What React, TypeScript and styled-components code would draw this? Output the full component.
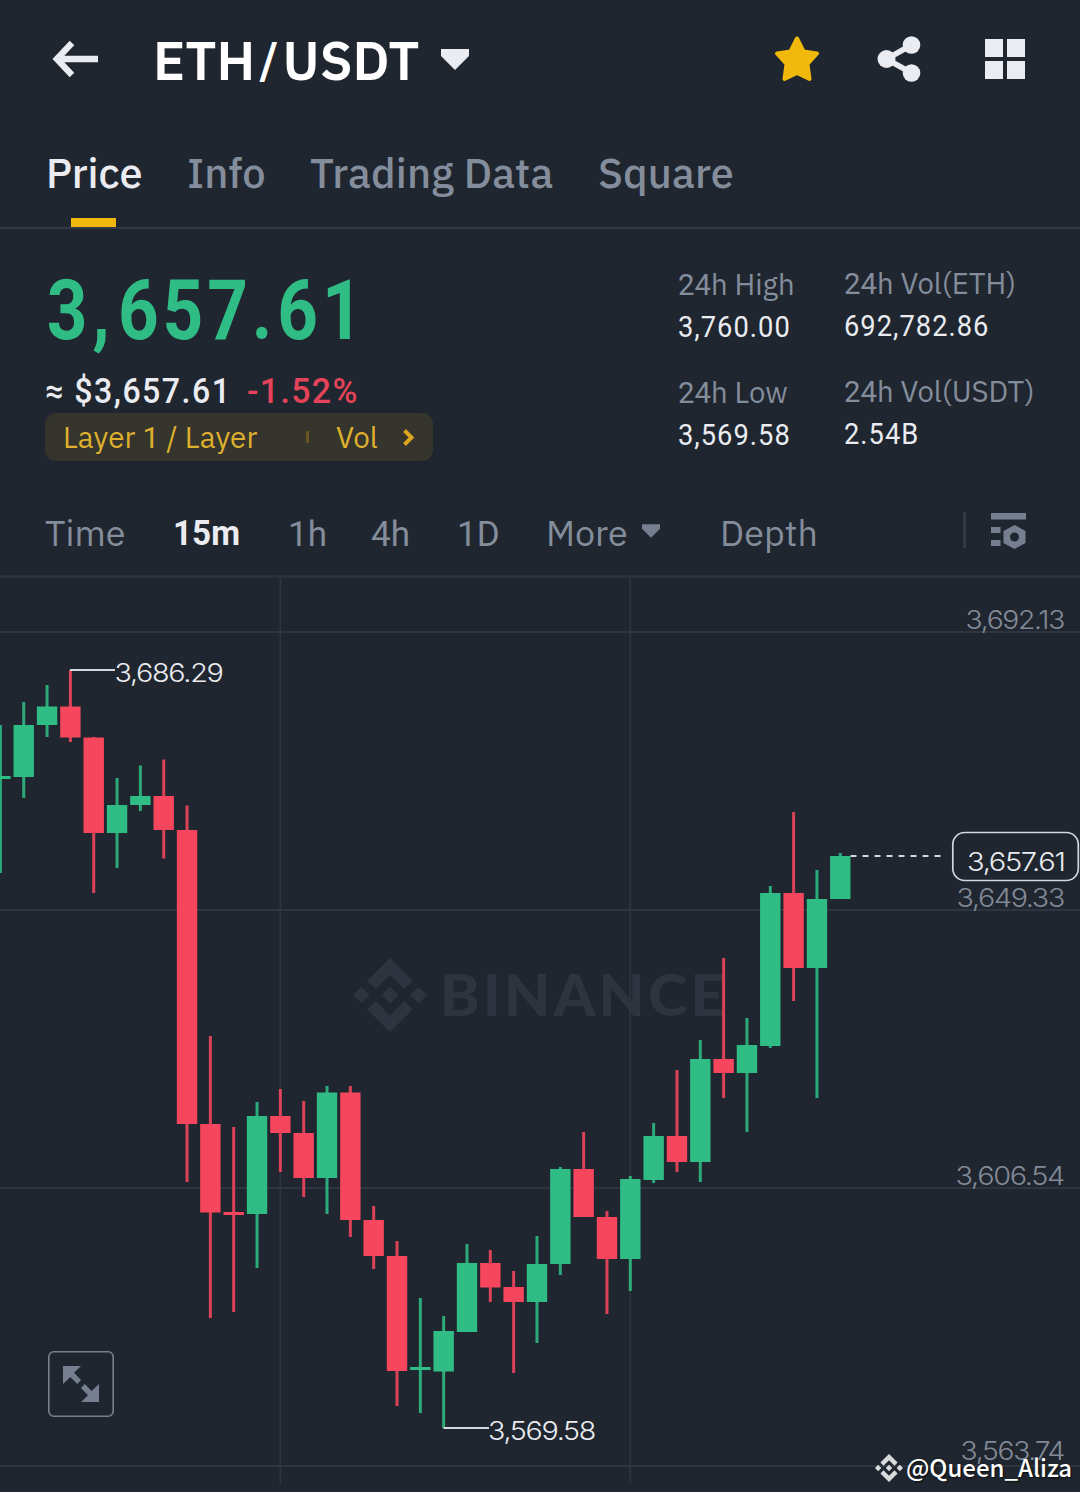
import React from 'react';
import styled, { createGlobalStyle } from 'styled-components';

const c = {
  bg: '#1f262f',
  line: '#2e3541',
  text: '#eaecf1',
  muted: '#848d9b',
  icon: '#767f90',
  axis: '#838a97',
  green: '#2fbd85',
  red: '#f6465d',
  yellow: '#f0b90b',
};

const plex = `"IBM Plex Sans", "Noto Sans CJK SC", sans-serif`;
const din = `"DIN", Roboto, sans-serif`;

const Global = createGlobalStyle`
  * { box-sizing: border-box; }
  body { margin: 0; background: ${c.bg}; }
`;

const Screen = styled.main`
  width: 1080px;
  height: 1492px;
  display: flex;
  flex-direction: column;
  overflow: hidden;
  background: ${c.bg};
  color: ${c.text};
  font-family: ${plex};
`;

interface Fit { $track?: number; $squeeze?: number }

const Label = styled.span<Fit>`
  display: block;
  white-space: pre;
  transform-origin: 0 50%;
  letter-spacing: ${p => p.$track ?? 0}px;
  transform: scaleX(${p => p.$squeeze ?? 1});
`;

const Digits = styled.span`
  font-family: ${din};
  line-height: 1;
`;

const Header = styled.header`
  height: 115px;
  display: flex;
  align-items: center;
  padding: 4px 55px 0 52px;
`;

const Glyph = styled.svg`
  display: block;
  flex: none;
  overflow: visible;
`;

const BackIcon = styled(Glyph)`
  margin-top: -1px;
`;

const PairButton = styled.div`
  display: flex;
  align-items: center;
  flex: 1;
  margin-left: 55px;
`;

const PairName = styled(Label)`
  width: 288px;
  font-size: 54.5px;
  line-height: 80px;
  font-weight: 600;
  color: #fff;
`;

const Slash = styled.span`
  font-size: 45px;
  line-height: 1;
  vertical-align: 5px;
  margin: 0 4px 0 4px;
`;

const Actions = styled.div`
  display: flex;
  align-items: center;
  gap: 57px;
  margin-top: -1px;
`;

const Tabs = styled.nav`
  height: 114px;
  display: flex;
  padding-left: 46px;
  border-bottom: 2px solid #323944;
`;

const Tab = styled.div<{ $active?: boolean; $width: number }>`
  width: ${p => p.$width}px;
  margin-right: 46px;
  padding-top: 27px;
  display: flex;
  flex-direction: column;
  justify-content: space-between;
  font-size: 41.6px;
  line-height: 60px;
  font-weight: 500;
  color: ${p => (p.$active ? c.text : c.muted)};
`;

const Underline = styled.i`
  width: 45px;
  height: 9px;
  margin-left: 25px;
  background: ${c.yellow};
`;

const Summary = styled.section`
  height: 256px;
  display: flex;
  padding: 0 0 0 45px;
  flex: none;
`;

const Quote = styled.div`
  width: 633px;
  flex: none;
  padding-top: 32px;
`;

const LastPrice = styled(Label)`
  font: 700 83px/100px ${din};
  color: ${c.green};
  padding-left: 2px;
`;

const Separator = styled.span<{ $left: number; $right: number }>`
  margin: 0 ${p => p.$right}px 0 ${p => p.$left}px;
`;

const SubPrice = styled.div`
  display: flex;
  height: 52px;
  padding-top: 10px;
  font: 500 34.5px/40px ${din};
`;

const Fiat = styled(Label)`
  width: 202px;
`;

const Change = styled(Label)`
  color: ${c.red};
  opacity: 0.92;
`;

const Category = styled.div`
  width: 388px;
  height: 48px;
  display: flex;
  align-items: center;
  padding-left: 18px;
  border-radius: 11px;
  background: #35342d;
  color: #dfb02d;
  font-size: 29.6px;
  line-height: 44px;
`;

const CategoryName = styled(Label)`
  width: 243px;
`;

const CategoryRule = styled.i`
  width: 3px;
  height: 12px;
  background: #685624;
  margin-right: 27px;
`;

const CategoryVol = styled(Label)`
  width: 67px;
`;

const Stats = styled.div`
  display: flex;
  flex: none;
`;

const StatColumn = styled.div<{ $width: number; $top: number }>`
  width: ${p => p.$width}px;
  padding-top: ${p => p.$top}px;
`;

const Stat = styled.div`
  height: 108px;
`;

const StatName = styled(Label)`
  font-size: 29.3px;
  line-height: 42px;
  color: ${c.muted};
  font-weight: 400;
`;

const StatValue = styled(Label)`
  font: 400 29px/42px ${din};
  padding-top: 1px;
`;

const Intervals = styled.nav`
  height: 93px;
  flex: none;
  display: flex;
  align-items: center;
  padding: 2px 0 0 45px;
  border-bottom: 3px solid #2a303c;
`;

const Interval = styled(Label)<{ $width: number; $numeric?: boolean; $active?: boolean }>`
  width: ${p => p.$width}px;
  font-family: ${p => (p.$numeric ? din : plex)};
  font-size: ${p => (p.$numeric ? 35 : 35.8)}px;
  font-weight: ${p => (p.$active ? 700 : 400)};
  line-height: 44px;
  padding-top: ${p => (p.$active ? 6 : p.$numeric ? 8 : 4)}px;
  color: ${p => (p.$active ? c.text : c.muted)};
`;

const MoreCaret = styled.div`
  width: 78px;
`;

const IntervalRule = styled.i`
  width: 3px;
  height: 36px;
  margin: 0 25px 3px 0;
  background: #333a46;
`;

const ChartArea = styled.section`
  position: relative;
  height: 914px;
`;

const Plot = styled.svg`
  display: block;
  font-family: Inter, "Liberation Sans", sans-serif;
  font-weight: 300;
  font-size: 26px;
`;

const PriceText = styled.text`
  letter-spacing: -1.2px;
`;

const Watermark = styled.text`
  font: 900 57px Lato, sans-serif;
  letter-spacing: 3px;
  fill: #2e333f;
`;

const Credit = styled.div`
  position: absolute;
  right: 8px;
  bottom: 4px;
  height: 40px;
  display: flex;
  align-items: center;
  gap: 3px;
  color: #fff;
  font-family: "Noto Sans CJK SC", sans-serif;
  font-size: 24px;
  line-height: 36px;
  font-weight: 500;
  text-shadow: 1px 1px 2px rgba(0, 0, 0, 0.7);
`;

const CreditName = styled(Label)`
  margin-top: -2px;
`;

const logoPath =
  'M38.73 53.2l24.59-24.58 24.6 24.6 14.3-14.31L63.32 0 24.43 38.9zM0 63.31l14.3-14.31 14.31 14.31-14.31 14.3zM38.73 73.41L63.32 98l24.6-24.6 14.31 14.29L63.32 126.6 24.43 87.71zM98 63.31l14.3-14.31 14.31 14.3-14.31 14.32zM77.83 63.3L63.32 48.78 48.81 63.28l14.51 14.5z';

// One entry per candle: high, body top, body bottom, low (canvas y), rising
type Candle = [number, number, number, number, 0 | 1];
const candles: Candle[] = [
  [725, 776, 779, 873, 1],
  [702, 725, 777, 798, 1],
  [685, 706.5, 725, 737, 1],
  [670, 706.5, 737.5, 742, 0],
  [737, 737.5, 833, 893, 0],
  [778, 805, 833, 868, 1],
  [765.5, 796, 805, 811, 1],
  [759.5, 796, 830, 858.5, 0],
  [805.5, 830, 1124, 1182, 0],
  [1036, 1124, 1212.5, 1318, 0],
  [1127, 1212, 1215, 1312, 0],
  [1102, 1116, 1214, 1268, 1],
  [1089, 1116, 1133, 1172, 0],
  [1101, 1133, 1178, 1197, 0],
  [1086, 1092.5, 1178, 1214, 1],
  [1086, 1092.5, 1220, 1237, 0],
  [1206, 1220, 1256, 1269, 0],
  [1241, 1256, 1371, 1406, 0],
  [1298, 1367, 1370, 1413, 1],
  [1316, 1331, 1371.5, 1428, 1],
  [1244, 1263, 1332, 1332, 1],
  [1250, 1263, 1287.5, 1302, 0],
  [1271, 1287, 1302, 1373, 0],
  [1236, 1264, 1302, 1343, 1],
  [1167, 1169, 1264, 1275, 1],
  [1132, 1169, 1217, 1217, 0],
  [1211, 1217, 1259, 1314, 0],
  [1176, 1179, 1259, 1291, 1],
  [1123, 1136, 1180, 1183, 1],
  [1070, 1136, 1162, 1172, 0],
  [1040, 1059, 1162, 1182, 1],
  [958, 1059, 1073, 1098, 0],
  [1018, 1045, 1073, 1132, 1],
  [886, 893, 1046, 1048, 1],
  [812, 893, 968, 1001, 0],
  [870, 899, 968, 1098, 1],
  [853, 856, 899, 899, 1],
];

const axis = [
  { text: '3,692.13', x: 965.5, w: 98.5, y: 629 },
  { text: '3,649.33', x: 956.5, w: 107.5, y: 907 },
  { text: '3,606.54', x: 955.5, w: 108.5, y: 1185 },
  { text: '3,563.74', x: 960.5, w: 103.5, y: 1460 },
];

const stats = [
  { width: 166, top: 34, rows: [['High', '3,760.00'], ['Low', '3,569.58']] },
  { width: 200, top: 33, rows: [['Vol(ETH)', '692,782.86'], ['Vol(USDT)', '2.54B']] },
];

const Caret = ({ w, h, color }: { w: number; h: number; color: string }) => (
  <Glyph width={w} height={h} viewBox="0 0 28 21">
    <path d="M0 0H28V7L14 21L0 7Z" fill={color} />
  </Glyph>
);

const Chart = () => (
  <Plot width={1080} height={914} viewBox="0 578 1080 914">
    <g transform="translate(353 958) scale(.5845)">
      <path d={logoPath} fill="#2e333f" />
    </g>
    <Watermark x={440} y={1016} textLength={288} lengthAdjust="spacingAndGlyphs">BINANCE</Watermark>
    <g fill={c.line}>
      {[631, 909, 1187, 1465].map(y => <rect key={y} x={0} y={y} width={1080} height={2} />)}
      {[279.5, 629.5].map(x => <rect key={x} x={x} y={578} width={1.6} height={906} />)}
    </g>
    {candles.map(([high, top, bottom, low, up], i) => {
      const x = 0.4 + i * 23.33;
      return (
        <g key={i} fill={up ? c.green : c.red}>
          <rect x={x - 1.5} y={high} width={3} height={low - high} opacity={0.88} />
          <rect x={x - 10.2} y={top} width={20.4} height={bottom - top} />
        </g>
      );
    })}
    <g stroke="#d4d7de" strokeWidth={2} fill="none">
      <path d="M70 670H115M443.500 1428H489" />
      <path d="M850.500 856H942" strokeDasharray="6 6" strokeWidth={1.8} />
      <rect x={952.800} y={832.500} width={125.500} height={48} rx={12} strokeWidth={1.7} />
    </g>
    <g fill={c.axis}>
      {axis.map(a => (
        <PriceText key={a.text} x={a.x} y={a.y} textLength={a.w} lengthAdjust="spacingAndGlyphs">{a.text}</PriceText>
      ))}
    </g>
    <g fill={c.text}>
      <PriceText x={114.5} y={682} textLength={108} lengthAdjust="spacingAndGlyphs">3,686.29</PriceText>
      <PriceText x={488} y={1440} textLength={107} lengthAdjust="spacingAndGlyphs">3,569.58</PriceText>
      <PriceText x={967} y={871} textLength={97.5} lengthAdjust="spacingAndGlyphs">3,657.61</PriceText>
    </g>
    <rect x={48.800} y={1351.800} width={64.400} height={64.400} rx={5} fill="none" stroke={c.icon} strokeWidth={1.6} />
    <path
      fill={c.icon}
      d="M63 1366H81L74 1372.700L81 1380L77.300 1384L70.300 1377L63 1384ZM99 1402H81L88 1395.300L81 1388L84.700 1384L91.700 1391L99 1384Z"
    />
  </Plot>
);

export default function App() {
  return (
    <Screen>
      <Global />
      <Header>
        <BackIcon width={46} height={38} viewBox="0 0 46 38">
          <path d="M20 3L4.800 19L20 35M5 19H46" fill="none" stroke={c.text} strokeWidth={6.3} />
        </BackIcon>
        <PairButton>
          <PairName $squeeze={0.988}>ETH<Slash>/</Slash>USDT</PairName>
          <Caret w={28} h={21} color={c.text} />
        </PairButton>
        <Actions>
          <Glyph width={46} height={46} viewBox="0 0 46 46">
            <path
              d="M23 2.500L29.500 15.500L43 17.500L33.500 28L35.500 43L23 37L10.500 43L12.500 28L3 17.500L16.500 15.500Z"
              fill={c.yellow}
              stroke={c.yellow}
              strokeWidth={4}
              strokeLinejoin="round"
            />
          </Glyph>
          <Glyph width={44} height={46} viewBox="0 0 44 46">
            <path d="M34.500 9L9.500 23L34.500 37" fill="none" stroke={c.text} strokeWidth={5.500} />
            <g fill={c.text}>
              <circle cx={9.500} cy={23} r={9} />
              <circle cx={34.500} cy={9} r={8.800} />
              <circle cx={34.500} cy={37} r={8.800} />
            </g>
          </Glyph>
          <Glyph width={47} height={40} viewBox="0 0 47 40">
            <path d="M7 0H25V18H7ZM29 0H47V18H29ZM7 22H25V40H7ZM29 22H47V40H29Z" fill={c.text} />
          </Glyph>
        </Actions>
      </Header>

      <Tabs>
        <Tab $width={95} $active><Label>Price</Label><Underline /></Tab>
        <Tab $width={77}><Label>Info</Label></Tab>
        <Tab $width={242}><Label $track={0.15}>Trading Data</Label></Tab>
        <Tab $width={140}><Label $track={0.1}>Square</Label></Tab>
      </Tabs>

      <Summary>
        <Quote>
          <LastPrice $track={4.6} $squeeze={0.855}>
            3<Separator $left={1} $right={5}>,</Separator>657<Separator $left={0} $right={1}>.</Separator>61
          </LastPrice>
          <SubPrice>
            <Fiat $track={1.6} $squeeze={0.93}>≈ $3,657.61</Fiat>
            <Change $track={1.4} $squeeze={0.98}>-1.52%</Change>
          </SubPrice>
          <Category>
            <CategoryName $track={0.07}>Layer <Digits>1</Digits> / Layer</CategoryName>
            <CategoryRule />
            <CategoryVol>Vol</CategoryVol>
            <Glyph width={11} height={17} viewBox="0 0 11 17">
              <path d="M1.500 1.500L8.500 8.500L1.500 15.500" fill="none" stroke="#dba51f" strokeWidth={4} />
            </Glyph>
          </Category>
        </Quote>
        <Stats>
          {stats.map(col => (
            <StatColumn key={col.top} $width={col.width} $top={col.top}>
              {col.rows.map(([name, value]) => (
                <Stat key={name}>
                  <StatName><Digits>24</Digits>h {name}</StatName>
                  <StatValue $track={1.1} $squeeze={0.94}>{value}</StatValue>
                </Stat>
              ))}
            </StatColumn>
          ))}
        </Stats>
      </Summary>

      <Intervals>
        <Interval $width={128}>Time</Interval>
        <Interval $width={115} $numeric $active $squeeze={0.95}>15m</Interval>
        <Interval $width={83} $numeric>1h</Interval>
        <Interval $width={86} $numeric>4h</Interval>
        <Interval $width={89} $numeric>1D</Interval>
        <Interval $width={96}>More</Interval>
        <MoreCaret><Caret w={18} h={14} color={c.icon} /></MoreCaret>
        <Interval $width={243} $track={0.2}>Depth</Interval>
        <IntervalRule />
        <Glyph width={35} height={36} viewBox="0 0 35 36">
          <path
            fillRule="evenodd"
            d="M0 0H35V6.500H0ZM0 14H9.500V20H0ZM0 27H9.500V33H0ZM23.500 12L34.500 18V30L23.500 36L12.500 30V18ZM23.500 19.500A4.500 4.500 0 1 0 23.500 28.500A4.500 4.500 0 1 0 23.500 19.500Z"
            fill={c.icon}
          />
        </Glyph>
      </Intervals>

      <ChartArea>
        <Chart />
        <Credit>
          <Glyph width={28} height={28} viewBox="0 0 126.61 126.61">
            <path d={logoPath} fill="#d9dadc" />
          </Glyph>
          <CreditName>@Queen_Aliza</CreditName>
        </Credit>
      </ChartArea>
    </Screen>
  );
}
